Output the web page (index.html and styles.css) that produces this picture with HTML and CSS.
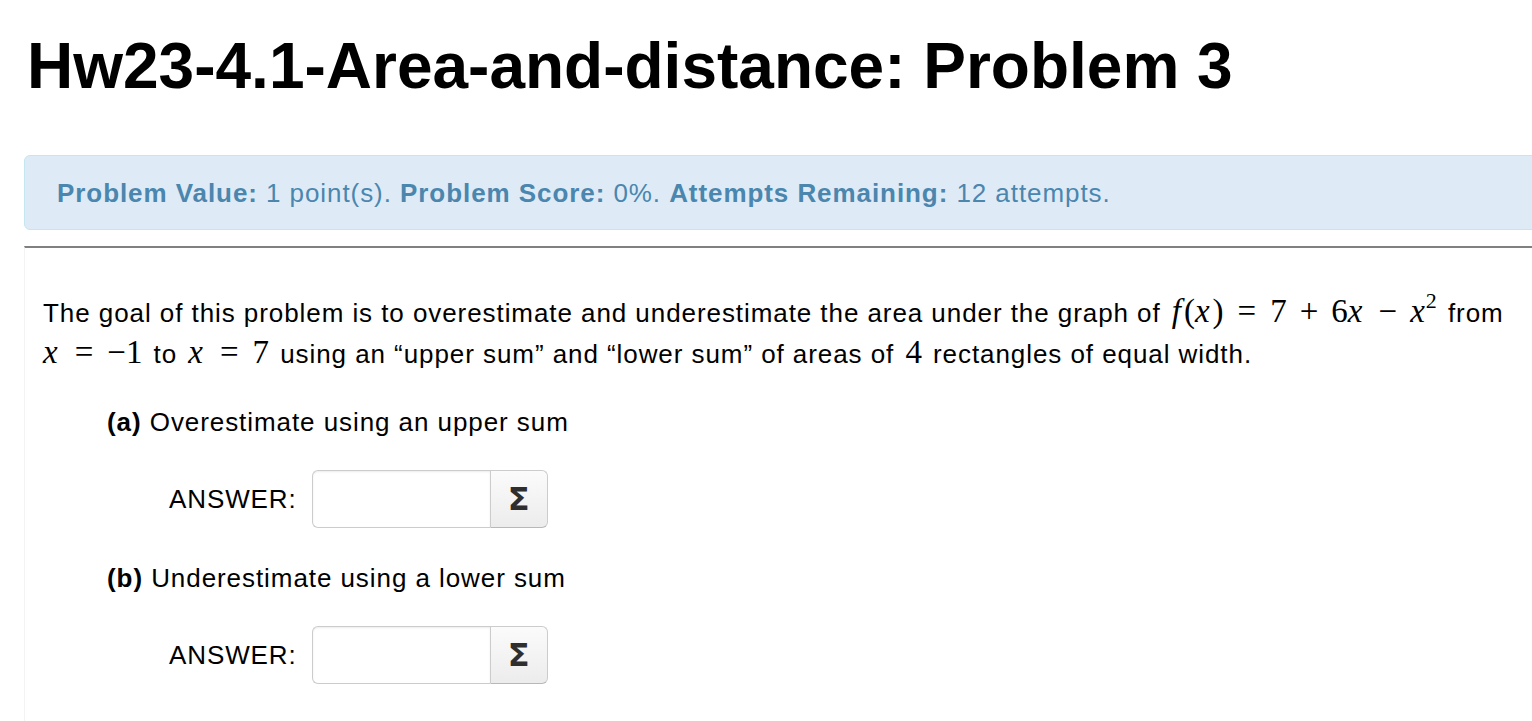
FILE: index.html
```html
<!DOCTYPE html>
<html lang="en">
<head>
<meta charset="utf-8">
<title>Hw23-4.1-Area-and-distance: Problem 3</title>
<link rel="stylesheet" href="styles.css">
</head>
<body>
<div class="page">
  <h1 class="title">Hw23-4.1-Area-and-distance: Problem 3</h1>
  <div class="alert">
    <p class="alert-text"><b>Problem Value:</b> 1 point(s). <b>Problem Score:</b> 0%. <b>Attempts Remaining:</b> 12 attempts.</p>
  </div>
  <div class="problem">
    <p class="intro">The goal of this problem is to overestimate and underestimate the area under the graph of <span class="math"><i class="fn">f</i>(<i>x</i>)<span class="rel">=</span>7<span class="bin">+</span>6<i>x</i><span class="bin">−</span><i class="base">x</i><sup>2</sup></span> from <span class="math first"><i>x</i><span class="rel">=</span>−1</span> to <span class="math"><i>x</i><span class="rel">=</span>7</span> using an “upper sum” and “lower sum” of areas of <span class="math">4</span> rectangles of equal width.</p>

    <div class="part">
      <p class="part-label"><b>(a)</b> Overestimate using an upper sum</p>
      <div class="answer-row">
        <span class="answer-label">ANSWER:</span>
        <div class="input-group">
          <input class="answer-input" type="text" aria-label="answer a">
          <button class="sigma-btn" type="button">Σ</button>
        </div>
      </div>
    </div>

    <div class="part">
      <p class="part-label"><b>(b)</b> Underestimate using a lower sum</p>
      <div class="answer-row">
        <span class="answer-label">ANSWER:</span>
        <div class="input-group">
          <input class="answer-input" type="text" aria-label="answer b">
          <button class="sigma-btn" type="button">Σ</button>
        </div>
      </div>
    </div>
  </div>
</div>
</body>
</html>
```
FILE: styles.css
```css
html, body {
  margin: 0;
  padding: 0;
  overflow: hidden;
  background: #ffffff;
}
body {
  font-family: "Liberation Sans", Arial, Helvetica, sans-serif;
  color: #000;
}
.page {
  width: calc(100% + 60px);
  box-sizing: border-box;
  padding-left: 24px;
}
.title {
  margin: 32px 0 55px 3px;
  font-size: 64px;
  line-height: 68px;
  font-weight: bold;
}
.alert {
  height: 73px;
  display: flex;
  align-items: center;
  background: #deebf7;
  border: 1px solid #c3e6f0;
  border-radius: 6px;
  padding: 0 32px;
  color: #4a86ad;
}
.alert-text {
  margin: 0;
  font-size: 26px;
  line-height: 32px;
  letter-spacing: 0.93px;
}
.problem {
  margin-top: 16px;
  border-top: 2px solid #808080;
  border-left: 1px solid #f3f3f3;
  padding: 45px 60px 40px 18px;
}
.intro {
  margin: 0;
  font-size: 26px;
  line-height: 41px;
  letter-spacing: 0.93px;
}
.math {
  font-family: "Liberation Serif", "Times New Roman", serif;
  font-size: 33px;
  line-height: 1;
  letter-spacing: 0;
  white-space: nowrap;
  margin: 0 3px;
}
.math.first {
  margin-left: 0;
}
.math i {
  font-style: italic;
  margin-right: 3px;
}
.math i.fn {
  margin-right: 3px;
}
.math i.base {
  margin-right: 0;
}
.math sup {
  font-size: 22px;
  line-height: 0;
  vertical-align: 14px;
  margin-left: 1px;
}
.rel {
  margin: 0 14px;
}
.bin {
  margin: 0 13px;
}
.part {
  padding-left: 64px;
  margin-top: 27px;
}
.part + .part {
  margin-top: 30px;
}
.part-label {
  margin: 0;
  font-size: 26px;
  line-height: 41px;
  letter-spacing: 0.93px;
}
.answer-row {
  display: flex;
  align-items: center;
  margin-top: 27px;
  padding-left: 62px;
}
.answer-label {
  font-size: 26px;
  letter-spacing: 0.9px;
  margin-right: 15px;
}
.input-group {
  display: flex;
  height: 58px;
}
.answer-input {
  width: 178px;
  height: 58px;
  box-sizing: border-box;
  border: 1px solid #cccccc;
  border-right: none;
  border-radius: 6px 0 0 6px;
  box-shadow: inset 0 1px 2px rgba(0,0,0,0.08);
  padding: 0 10px;
  font-size: 24px;
  outline: none;
  margin: 0;
}
.sigma-btn {
  width: 58px;
  height: 58px;
  box-sizing: border-box;
  margin: 0;
  border: 1px solid #cccccc;
  border-bottom-color: #b8b8b8;
  border-radius: 0 6px 6px 0;
  background: linear-gradient(#fbfbfb, #ececec);
  color: #2e2e2e;
  font-family: "DejaVu Sans", sans-serif;
  font-weight: bold;
  font-size: 32px;
  line-height: 1;
  padding: 0;
}
```
